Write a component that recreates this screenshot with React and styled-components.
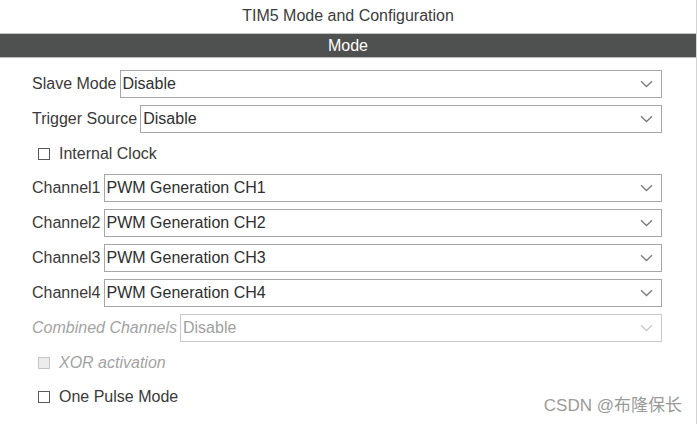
import styled, { createGlobalStyle } from "styled-components";

const GlobalStyle = createGlobalStyle`
  html, body {
    margin: 0;
    padding: 0;
    background: #ffffff;
  }
  body {
    font-family: "Liberation Sans", Arial, sans-serif;
  }
`;

const Panel = styled.div`
  position: relative;
  width: 697px;
  height: 424px;
  border-right: 1px solid #d4d4d4;
  box-sizing: border-box;
  background: #ffffff;
`;

const Title = styled.div`
  height: 33px;
  line-height: 31px;
  text-align: center;
  font-size: 16px;
  color: #3c3c3c;
  border-bottom: 1px solid #c4c4c4;
`;

const SectionBar = styled.div`
  height: 23px;
  line-height: 23px;
  background: #4f5150;
  color: #ffffff;
  text-align: center;
  font-size: 16px;
  border-bottom: 1px solid #bdbdbd;
`;

const Form = styled.div`
  display: flex;
  flex-direction: column;
  gap: 7px;
  padding: 12px 34px 0 32px;
`;

const Row = styled.div`
  display: flex;
  align-items: center;
  height: 28px;
  gap: 3px;
`;

const Label = styled.span`
  font-size: 16px;
  white-space: nowrap;
  color: ${({ disabled }) => (disabled ? "#a3a3a3" : "#3a3a3a")};
  font-style: ${({ disabled }) => (disabled ? "italic" : "normal")};
`;

const Select = styled.div`
  flex: 1;
  height: 28px;
  box-sizing: border-box;
  display: flex;
  align-items: center;
  justify-content: space-between;
  padding: 0 8px 0 2px;
  border: 1px solid ${({ disabled }) => (disabled ? "#c9c9c9" : "#a6a6a6")};
  font-size: 16px;
  color: ${({ disabled }) => (disabled ? "#a0a0a0" : "#2f2f2f")};
  background: #ffffff;
`;

const Check = styled.label`
  display: flex;
  align-items: center;
  gap: 9px;
  height: 27px;
  padding-left: 6px;
  font-size: 16px;
  color: ${({ disabled }) => (disabled ? "#a3a3a3" : "#3a3a3a")};
  font-style: ${({ disabled }) => (disabled ? "italic" : "normal")};
`;

const Box = styled.span`
  width: 12px;
  height: 12px;
  box-sizing: border-box;
  border: 1px solid ${({ disabled }) => (disabled ? "#c4c4c4" : "#5a5a5a")};
  background: ${({ disabled }) => (disabled ? "#ececec" : "#ffffff")};
`;

const Watermark = styled.div`
  position: absolute;
  right: 14px;
  bottom: 8px;
  font-size: 17px;
  color: #9a9a9a;
  font-family: "Liberation Sans", "Noto Sans CJK SC", sans-serif;
`;

function Chevron({ disabled }) {
  return (
    <svg width="13" height="8" viewBox="0 0 13 8">
      <path
        d="M1 1.2 L6.5 6.5 L12 1.2"
        fill="none"
        stroke={disabled ? "#c8c8c8" : "#7a7a7a"}
        strokeWidth="1.3"
      />
    </svg>
  );
}

function Field({ label, value, disabled }) {
  return (
    <Row>
      <Label disabled={disabled}>{label}</Label>
      <Select disabled={disabled}>
        <span>{value}</span>
        <Chevron disabled={disabled} />
      </Select>
    </Row>
  );
}

function CheckRow({ label, disabled }) {
  return (
    <Check disabled={disabled}>
      <Box disabled={disabled} />
      {label}
    </Check>
  );
}

export default function App() {
  return (
    <>
      <GlobalStyle />
      <Panel>
        <Title>TIM5 Mode and Configuration</Title>
        <SectionBar>Mode</SectionBar>
        <Form>
          <Field label="Slave Mode" value="Disable" />
          <Field label="Trigger Source" value="Disable" />
          <CheckRow label="Internal Clock" />
          <Field label="Channel1" value="PWM Generation CH1" />
          <Field label="Channel2" value="PWM Generation CH2" />
          <Field label="Channel3" value="PWM Generation CH3" />
          <Field label="Channel4" value="PWM Generation CH4" />
          <Field label="Combined Channels" value="Disable" disabled />
          <CheckRow label="XOR activation" disabled />
          <CheckRow label="One Pulse Mode" />
        </Form>
        <Watermark>CSDN @布隆保长</Watermark>
      </Panel>
    </>
  );
}
